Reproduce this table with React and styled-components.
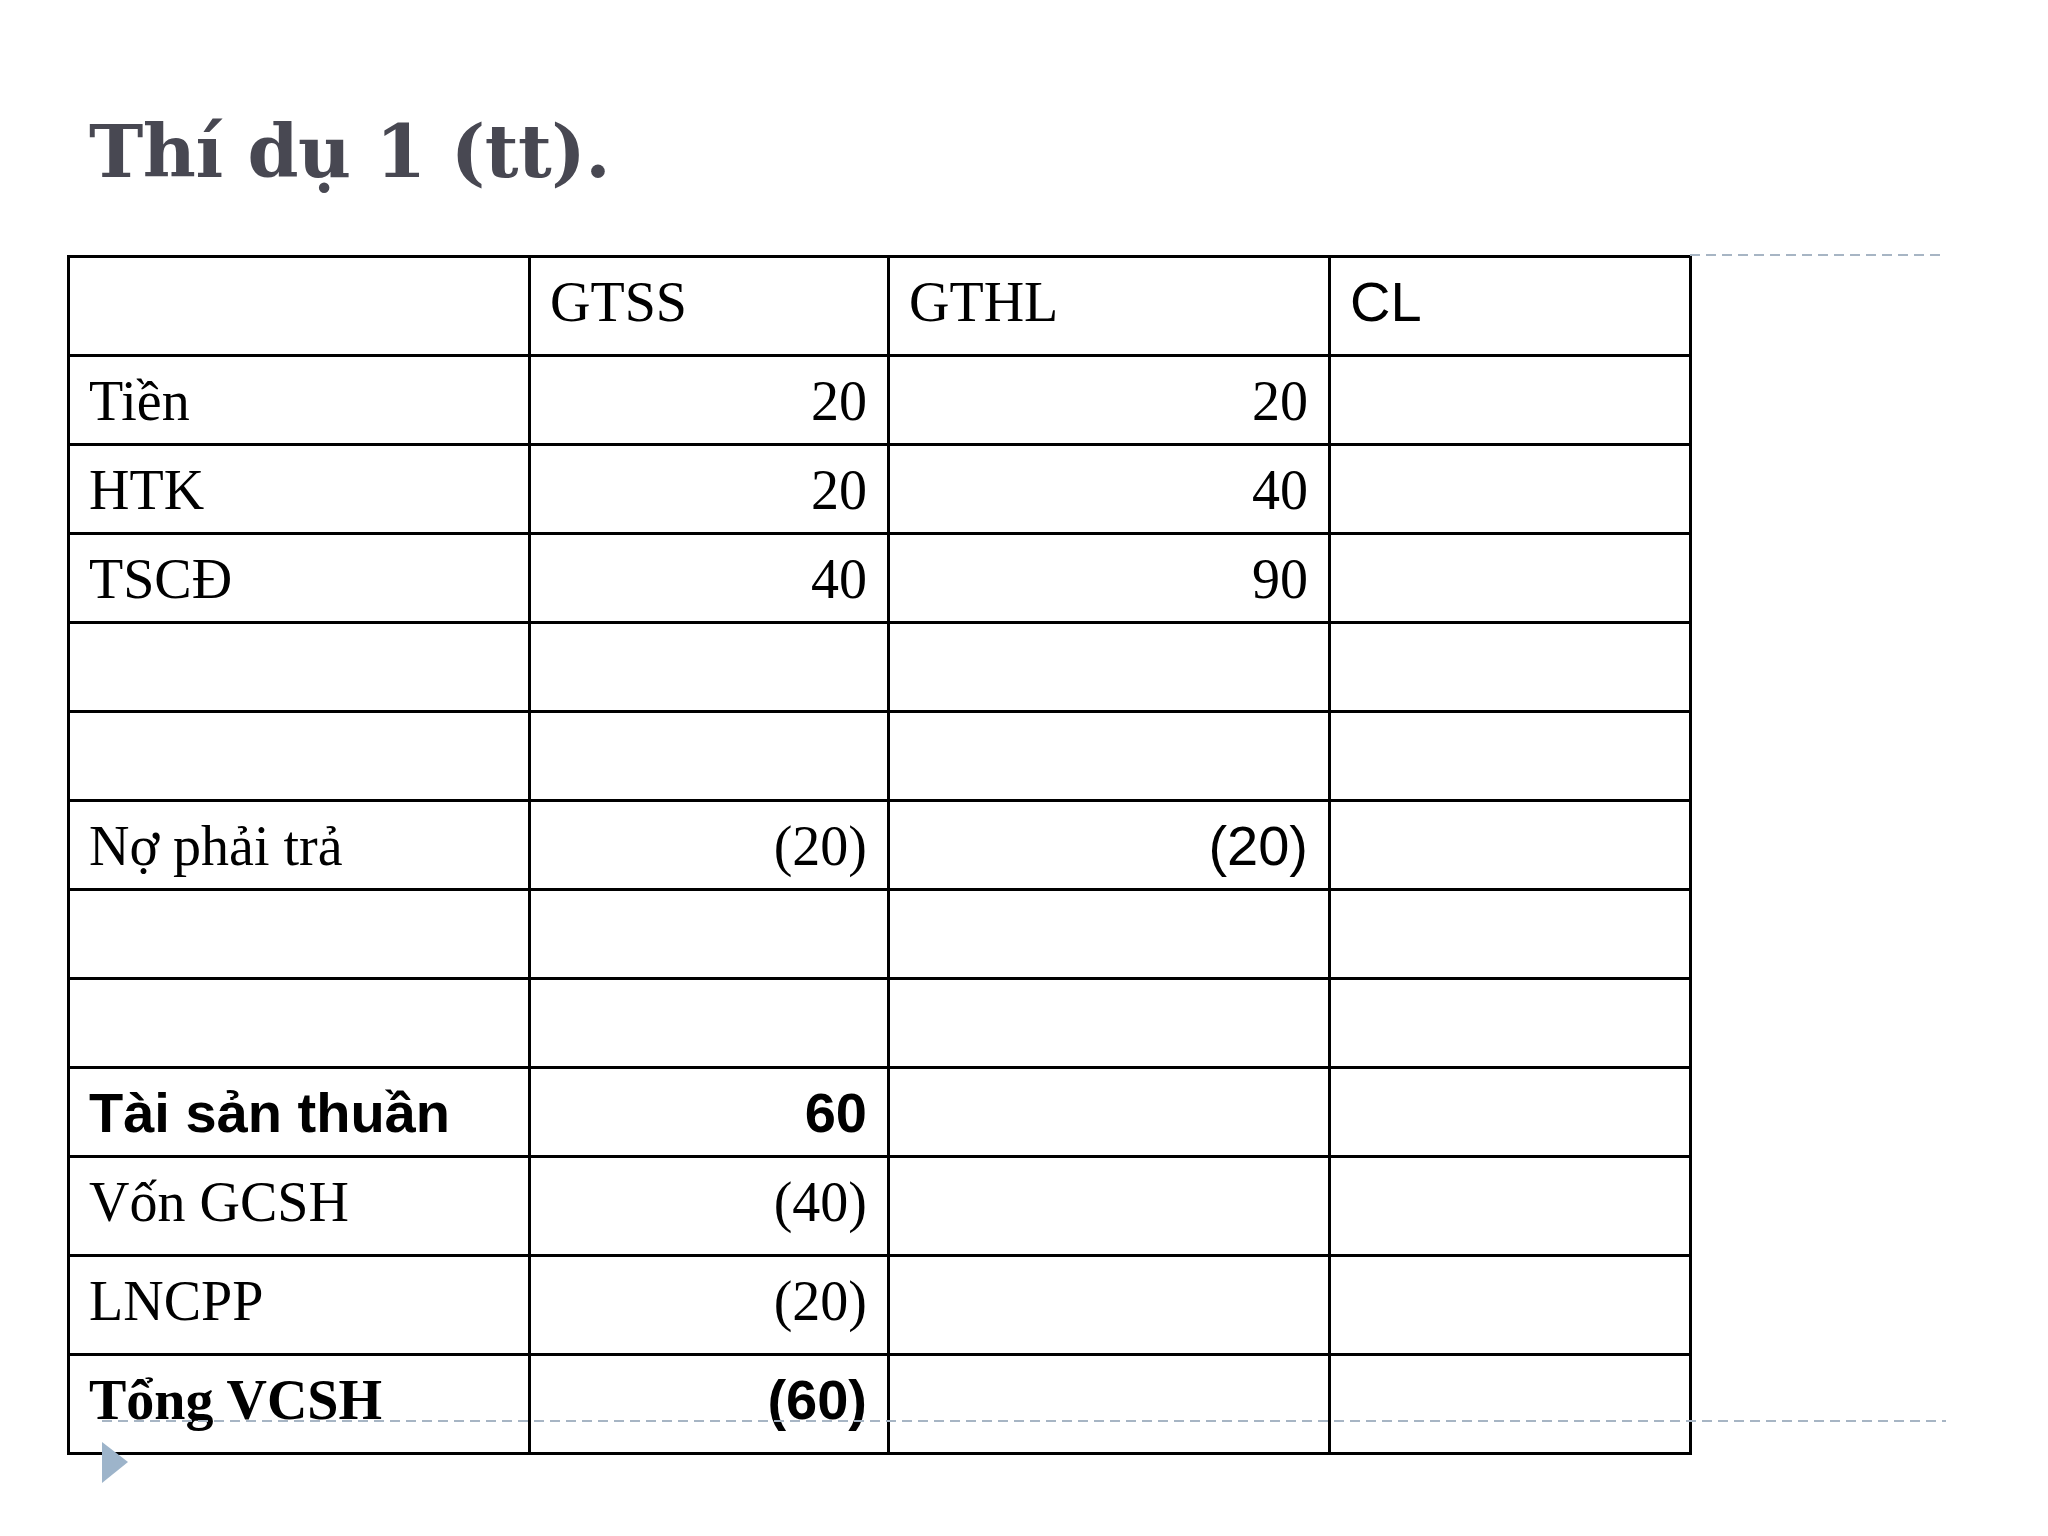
import React from "react";
import styled, { createGlobalStyle } from "styled-components";

const GlobalStyle = createGlobalStyle`
  html, body {
    margin: 0;
    padding: 0;
    background: #ffffff;
  }
`;

const Slide = styled.div`
  position: relative;
  width: 2048px;
  height: 1536px;
  box-sizing: border-box;
  padding: 106px 0 0 67px;
  background: #ffffff;
  overflow: hidden;
`;

const Title = styled.h1`
  margin: 0 0 0 22px;
  font-family: "DejaVu Serif", "Liberation Serif", serif;
  font-weight: 700;
  font-size: 73px;
  line-height: 90px;
  letter-spacing: -0.5px;
  color: #484852;
`;

const Table = styled.table`
  margin-top: 59px;
  width: 1622px;
  border-collapse: collapse;
  table-layout: fixed;
`;

const Col = styled.col`
  width: ${({ $w }) => $w}px;
`;

const Row = styled.tr`
  height: ${({ $tall }) => ($tall ? 99 : 89)}px;
`;

const Cell = styled.td`
  border: 3px solid #000000;
  padding: 12px 20px 0 19px;
  vertical-align: top;
  text-align: ${({ $right }) => ($right ? "right" : "left")};
  font-family: ${({ $sans }) =>
    $sans ? '"Liberation Sans", Arial, sans-serif' : '"Liberation Serif", "Times New Roman", serif'};
  font-weight: ${({ $bold }) => ($bold ? 700 : 400)};
  font-size: 56px;
  line-height: 64px;
  color: #000000;
  white-space: nowrap;
`;

const Dashed = styled.div`
  position: absolute;
  left: ${({ $x }) => $x}px;
  top: ${({ $y }) => $y}px;
  width: ${({ $w }) => $w}px;
  height: 2px;
  background: repeating-linear-gradient(
    to right,
    #a7b5c4 0 10px,
    transparent 10px 16px
  );
`;

const Marker = styled.div`
  position: absolute;
  left: 102px;
  top: 1442px;
  width: 0;
  height: 0;
  border-top: 20px solid transparent;
  border-bottom: 21px solid transparent;
  border-left: 26px solid #9db4ca;
`;

const rows = [
  { label: "Tiền", a: "20", b: "20" },
  { label: "HTK", a: "20", b: "40" },
  { label: "TSCĐ", a: "40", b: "90" },
  { label: "" },
  { label: "" },
  { label: "Nợ phải trả", a: "(20)", b: "(20)", bSans: true },
  { label: "" },
  { label: "" },
  { label: "Tài sản thuần", labelSans: true, labelBold: true, a: "60", aSans: true, aBold: true },
  { label: "Vốn GCSH", a: "(40)", tall: true },
  { label: "LNCPP", a: "(20)", tall: true },
  { label: "Tổng VCSH", labelBold: true, a: "(60)", aSans: true, aBold: true, tall: true },
];

export default function App() {
  return (
    <>
      <GlobalStyle />
      <Slide>
        <Title>Thí dụ 1 (tt).</Title>
        <Table>
          <colgroup>
            <Col $w={461} />
            <Col $w={359} />
            <Col $w={441} />
            <Col $w={361} />
          </colgroup>
          <tbody>
            <Row $tall>
              <Cell />
              <Cell>GTSS</Cell>
              <Cell>GTHL</Cell>
              <Cell $sans>CL</Cell>
            </Row>
            {rows.map((r, i) => (
              <Row key={i} $tall={r.tall}>
                <Cell $sans={r.labelSans} $bold={r.labelBold}>
                  {r.label}
                </Cell>
                <Cell $right $sans={r.aSans} $bold={r.aBold}>
                  {r.a}
                </Cell>
                <Cell $right $sans={r.bSans}>
                  {r.b}
                </Cell>
                <Cell />
              </Row>
            ))}
          </tbody>
        </Table>
        <Dashed $x={1690} $y={254} $w={256} />
        <Dashed $x={102} $y={1420} $w={1844} />
        <Marker />
      </Slide>
    </>
  );
}
